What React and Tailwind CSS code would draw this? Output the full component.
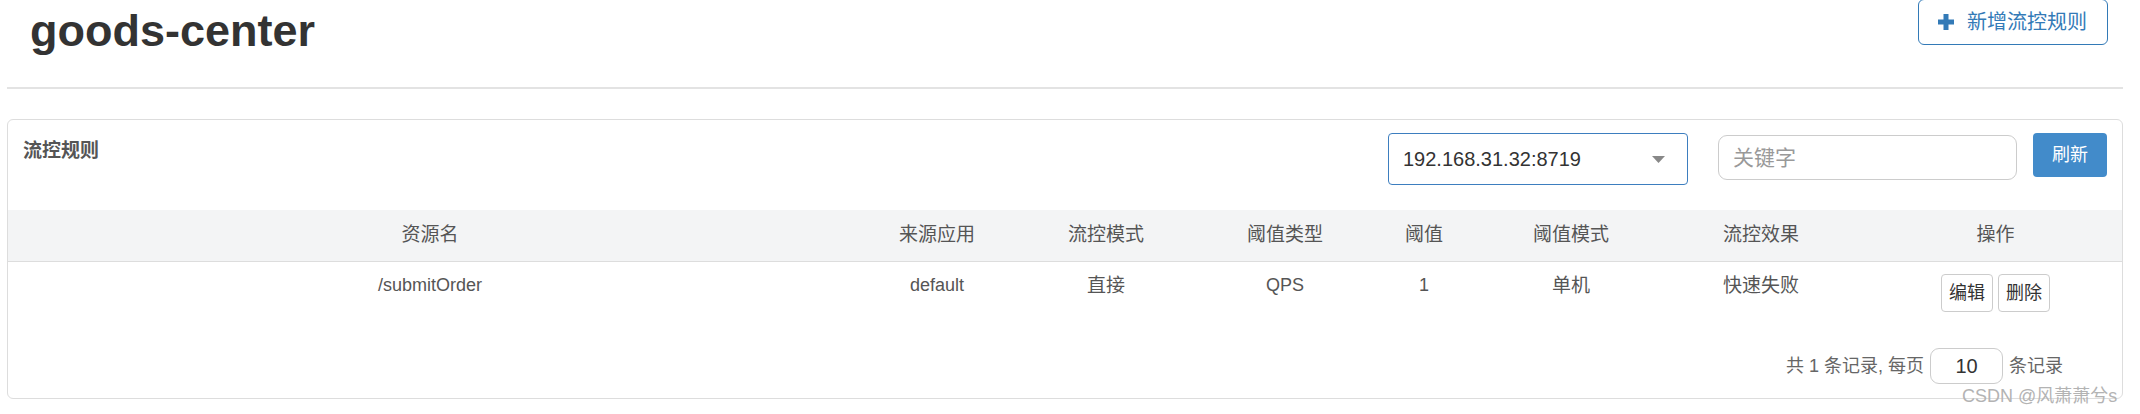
import { useState } from 'react';

const fontClass = "font-['Liberation_Sans','Noto_Sans_CJK_SC',sans-serif]";
const colsClass = 'grid grid-cols-[844px_170px_168px_190px_88px_206px_174px_1fr]';
const smBtnClass = 'h-[38px] px-[7px] border border-[#ccc] rounded-[4px] bg-white text-[18px] leading-none text-[#333]';

const headers = ['资源名', '来源应用', '流控模式', '阈值类型', '阈值', '阈值模式', '流控效果', '操作'];

const rules = [
  { resource: '/submitOrder', limitApp: 'default', strategy: '直接', grade: 'QPS', count: '1', mode: '单机', behavior: '快速失败' },
];

function PlusIcon() {
  return (
    <svg width="16" height="16" viewBox="0 0 16 16" className="shrink-0">
      <rect x="5.5" y="0" width="5" height="16" fill="#337ab7" />
      <rect x="0" y="5.5" width="16" height="5" fill="#337ab7" />
    </svg>
  );
}

export default function App() {
  const [keyword, setKeyword] = useState('');
  const [pageSize, setPageSize] = useState('10');

  return (
    <div className={`w-[2140px] h-[414px] bg-white relative overflow-hidden ${fontClass}`}>
      <div className="ml-[7px] w-[2116px]">
        <div className="h-[87px] flex items-start justify-between pl-[23px] pr-[15px]">
          <h1 className="mt-[8px] text-[45px] leading-none font-bold text-[#333]">goods-center</h1>
          <button className="-mt-[1px] h-[46px] flex items-center gap-[13px] pl-[19px] pr-[20px] border border-[#337ab7] rounded-[6px] bg-white text-[20px] leading-none text-[#337ab7]">
            <PlusIcon />
            新增流控规则
          </button>
        </div>
        <div className="h-[2px] bg-[#e3e3e3]" />

        <div className="mt-[30px] h-[280px] border border-[#ddd] rounded-[6px]">
          <div className="h-[90px] flex items-start pl-[15px] pr-[15px]">
            <div className="pt-[21px] text-[19px] leading-none font-bold text-[#555]">流控规则</div>
            <div className="ml-auto pt-[13px] flex items-start">
              <div className="w-[300px] h-[52px] flex items-center justify-between pl-[14px] pr-[22px] border border-[#3d7ebf] rounded-[4px] text-[20px] text-[#333]">
                <span>192.168.31.32:8719</span>
                <svg width="13" height="7" viewBox="0 0 13 7"><path d="M0 0h13L6.5 7z" fill="#888" /></svg>
              </div>
              <input
                className="ml-[30px] mt-[2px] w-[299px] h-[45px] px-[14px] border border-[#ccc] rounded-[9px] text-[21px] text-[#333] placeholder-[#999] outline-none"
                placeholder="关键字"
                value={keyword}
                onChange={e => setKeyword(e.target.value)}
              />
              <button className="ml-[16px] w-[74px] h-[44px] rounded-[4px] bg-[#428bca] text-white text-[18px] leading-none">刷新</button>
            </div>
          </div>

          <div className={`${colsClass} h-[52px] bg-[#f3f4f5] border-b border-[#ddd] text-[19px] text-[#555]`}>
            {headers.map((h, i) => (
              <div key={h} className={`flex items-center justify-center ${i === 7 ? 'pl-[21px]' : ''}`}>{h}</div>
            ))}
          </div>

          {rules.map(r => (
            <div key={r.resource} className={`${colsClass} h-[86px] text-[#555] leading-[27px]`}>
              <div className="pt-[10px] text-center text-[18px]">{r.resource}</div>
              <div className="pt-[10px] text-center text-[18px]">{r.limitApp}</div>
              <div className="pt-[10px] text-center text-[19px]">{r.strategy}</div>
              <div className="pt-[10px] text-center text-[18px]">{r.grade}</div>
              <div className="pt-[10px] text-center text-[18px]">{r.count}</div>
              <div className="pt-[10px] text-center text-[19px]">{r.mode}</div>
              <div className="pt-[10px] text-center text-[19px]">{r.behavior}</div>
              <div className="pt-[12px] pl-[21px] flex justify-center gap-[5px]">
                <button className={smBtnClass}>编辑</button>
                <button className={smBtnClass}>删除</button>
              </div>
            </div>
          ))}

          <div className="h-[36px] flex items-center justify-end pr-[59px] text-[18px] text-[#666]">
            <span>共 1 条记录, 每页</span>
            <input
              className="ml-[6px] mr-[6px] w-[73px] h-[36px] border border-[#ccc] rounded-[9px] text-center text-[20px] text-[#333] outline-none"
              value={pageSize}
              onChange={e => setPageSize(e.target.value)}
            />
            <span>条记录</span>
          </div>
        </div>
      </div>

      <div className="absolute left-[1962px] top-[384px] text-[18px] leading-[24px] text-[#b3b3b3] whitespace-nowrap">CSDN @风萧萧兮s</div>
    </div>
  );
}
